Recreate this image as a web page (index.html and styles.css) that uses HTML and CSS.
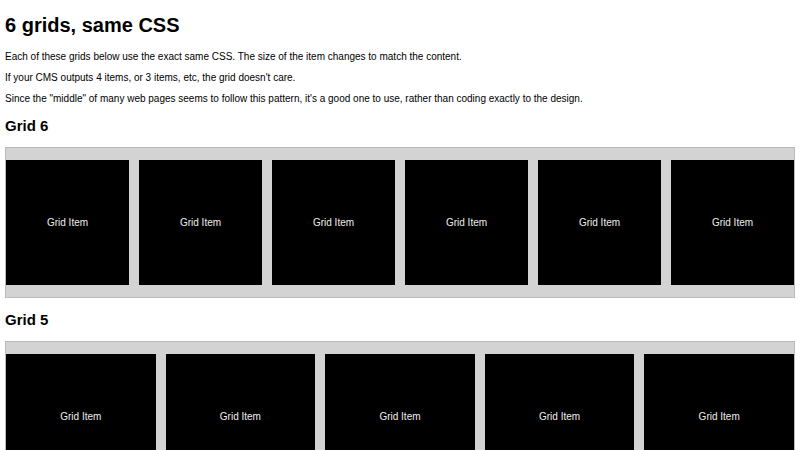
FILE: index.html
```html
<!DOCTYPE html>
<html lang="en">
<head>
    <meta charset="UTF-8">
    <meta name="viewport" content="width=device-width, initial-scale=1.0">
    <title>6 grids, same CSS</title>
    <link rel="stylesheet" href="styles.css">
</head>
<body>
    <h1>6 grids, same CSS</h1>
    <p>Each of these grids below use the exact same CSS. The size of the item changes to match the content.</p>
    <p>If your CMS outputs 4 items, or 3 items, etc, the grid doesn't care.</p>
    <p>Since the "middle" of many web pages seems to follow this pattern, it's a good one to use, rather than coding exactly to the design.</p>

    <h2>Grid 6</h2>
    <div class="grid">
        <div class="grid-item">Grid Item</div>
        <div class="grid-item">Grid Item</div>
        <div class="grid-item">Grid Item</div>
        <div class="grid-item">Grid Item</div>
        <div class="grid-item">Grid Item</div>
        <div class="grid-item">Grid Item</div>
    </div>

    <h2>Grid 5</h2>
    <div class="grid">
        <div class="grid-item">Grid Item</div>
        <div class="grid-item">Grid Item</div>
        <div class="grid-item">Grid Item</div>
        <div class="grid-item">Grid Item</div>
        <div class="grid-item">Grid Item</div>
    </div>

    <h2>Grid 4</h2>
    <div class="grid">
        <div class="grid-item">Grid Item</div>
        <div class="grid-item">Grid Item</div>
        <div class="grid-item">Grid Item</div>
        <div class="grid-item">Grid Item</div>
    </div>
</body>
</html>
```

FILE: styles.css
```css
body{
    margin: 0px 5px;
    font-family: "Liberation Sans", Arial, sans-serif;
    font-size: 10px;
    color: #000;
}
h1{
    font-size: 20px;
    margin: 14px 0px;
}
p{
    margin: 10px 0px;
}
h2{
    font-size: 15px;
    margin: 13px 0px;
    line-height: 17px;
}
/* same rules for every grid, columns follow the item count */
.grid{
    display: flex;
    gap: 10px;
    padding: 12px 0px;
    background: #d3d3d3;
    border: 1px solid #bbb;
}
.grid-item{
    flex: 1;
    height: 125px;
    display: flex;
    align-items: center;
    justify-content: center;
    background: #000;
    color: #eee;
}
```
